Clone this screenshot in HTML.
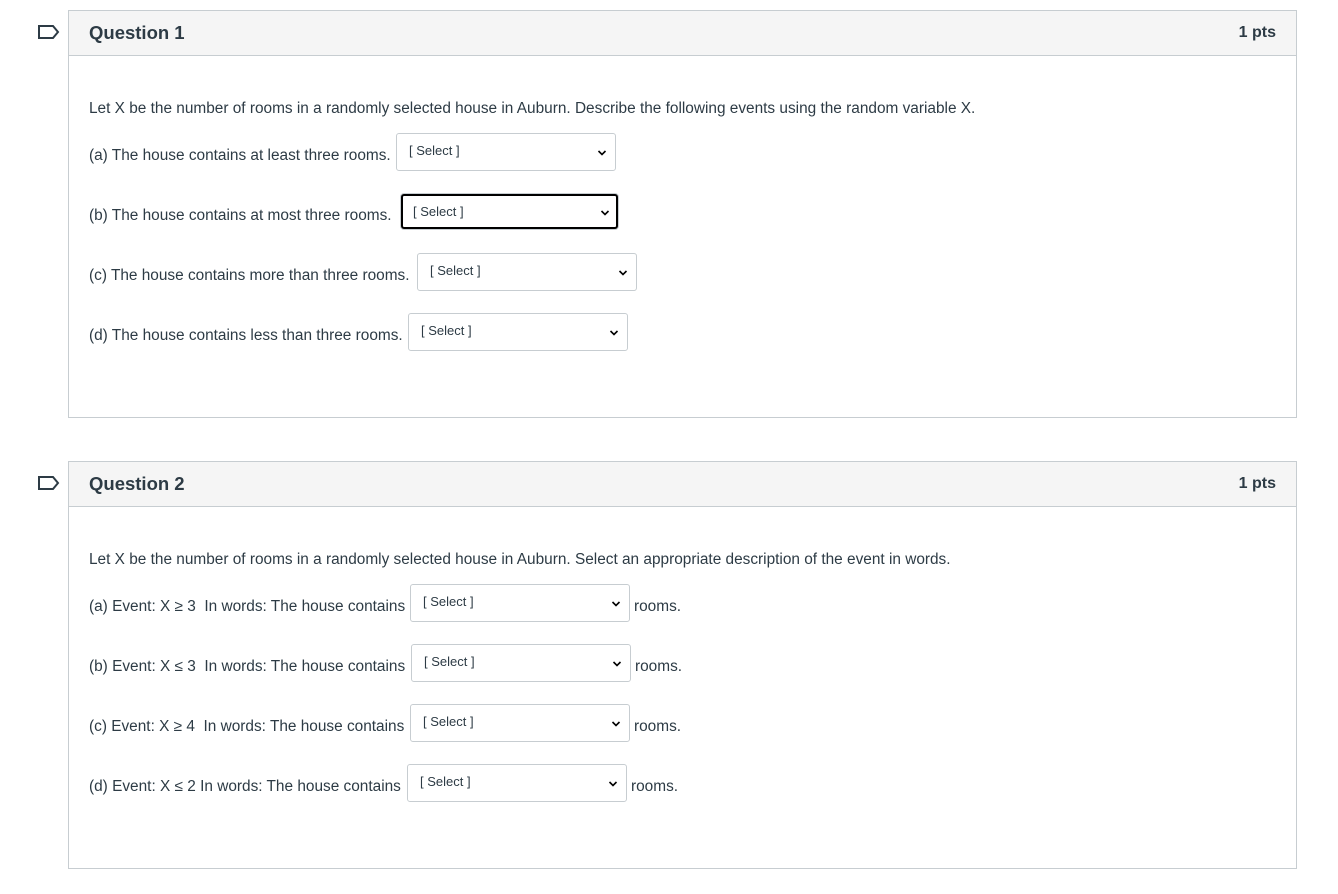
<!DOCTYPE html>
<html><head><meta charset="utf-8"><style>
body{margin:0;width:1338px;height:894px;background:#fff;font-family:"Liberation Sans",sans-serif;color:#2d3b45;position:relative;overflow:hidden}
.box{position:absolute;left:68px;width:1229px;height:408px;border:1px solid #c7cdd1;box-sizing:border-box}
.hd{position:absolute;left:0;top:0;right:0;height:44px;background:#f5f5f5;border-bottom:1px solid #c7cdd1}
.hd b{position:absolute;left:20px;top:11px;font-size:18.5px}
.hd i{position:absolute;right:20px;top:13px;font-size:16px;font-style:normal;font-weight:bold}
.t{position:absolute;font-size:15.4px;white-space:nowrap}
.s{position:absolute;width:220px;height:38px;border:1px solid #c7cdd1;border-radius:3px;box-sizing:border-box;background:#fff}
.s span{position:absolute;left:12px;top:9px;font-size:13px}
.s svg{position:absolute;right:8px;top:15px}
.f{border:2px solid #000;box-shadow:0 0 0 1px #c7cdd1;height:35px;width:217px}
.flag{position:absolute;left:37px;width:24px;height:16px}
</style></head><body>
<svg class="flag" style="top:24px" viewBox="0 0 24 16"><path d="M2 2H16L21 8L16 14H2Z" fill="none" stroke="#2d3b45" stroke-width="2"/></svg>
<svg class="flag" style="top:475px" viewBox="0 0 24 16"><path d="M2 2H16L21 8L16 14H2Z" fill="none" stroke="#2d3b45" stroke-width="2"/></svg>

<div class="box" style="top:10px"><div class="hd"><b>Question 1</b><i>1 pts</i></div></div>
<div class="t" style="left:89px;top:100px">Let X be the number of rooms in a randomly selected house in Auburn. Describe the following events using the random variable X.</div>
<div class="t" style="left:89px;top:147px">(a) The house contains at least three rooms.</div>
<div class="s" style="left:396px;top:133px"><span>[ Select ]</span><svg width="10" height="8"><path d="M1.5 2L5 5.5L8.5 2" fill="none" stroke="#000" stroke-width="1.6"/></svg></div>
<div class="t" style="left:89px;top:207px">(b) The house contains at most three rooms.</div>
<div class="s f" style="left:401px;top:194px"><span style="left:10px;top:8px">[ Select ]</span><svg width="10" height="8" style="top:13px;right:6px"><path d="M1.5 2L5 5.5L8.5 2" fill="none" stroke="#000" stroke-width="1.6"/></svg></div>
<div class="t" style="left:89px;top:267px">(c) The house contains more than three rooms.</div>
<div class="s" style="left:417px;top:253px"><span>[ Select ]</span><svg width="10" height="8"><path d="M1.5 2L5 5.5L8.5 2" fill="none" stroke="#000" stroke-width="1.6"/></svg></div>
<div class="t" style="left:89px;top:327px">(d) The house contains less than three rooms.</div>
<div class="s" style="left:408px;top:313px"><span>[ Select ]</span><svg width="10" height="8"><path d="M1.5 2L5 5.5L8.5 2" fill="none" stroke="#000" stroke-width="1.6"/></svg></div>

<div class="box" style="top:461px"><div class="hd"><b>Question 2</b><i>1 pts</i></div></div>
<div class="t" style="left:89px;top:551px">Let X be the number of rooms in a randomly selected house in Auburn. Select an appropriate description of the event in words.</div>
<div class="t" style="left:89px;top:598px">(a) Event: X ≥ 3&nbsp; In words: The house contains</div>
<div class="s" style="left:410px;top:584px"><span>[ Select ]</span><svg width="10" height="8"><path d="M1.5 2L5 5.5L8.5 2" fill="none" stroke="#000" stroke-width="1.6"/></svg></div>
<div class="t" style="left:634px;top:598px">rooms.</div>
<div class="t" style="left:89px;top:658px">(b) Event: X ≤ 3&nbsp; In words: The house contains</div>
<div class="s" style="left:411px;top:644px"><span>[ Select ]</span><svg width="10" height="8"><path d="M1.5 2L5 5.5L8.5 2" fill="none" stroke="#000" stroke-width="1.6"/></svg></div>
<div class="t" style="left:635px;top:658px">rooms.</div>
<div class="t" style="left:89px;top:718px">(c) Event: X ≥ 4&nbsp; In words: The house contains</div>
<div class="s" style="left:410px;top:704px"><span>[ Select ]</span><svg width="10" height="8"><path d="M1.5 2L5 5.5L8.5 2" fill="none" stroke="#000" stroke-width="1.6"/></svg></div>
<div class="t" style="left:634px;top:718px">rooms.</div>
<div class="t" style="left:89px;top:778px">(d) Event: X ≤ 2 In words: The house contains</div>
<div class="s" style="left:407px;top:764px"><span>[ Select ]</span><svg width="10" height="8"><path d="M1.5 2L5 5.5L8.5 2" fill="none" stroke="#000" stroke-width="1.6"/></svg></div>
<div class="t" style="left:631px;top:778px">rooms.</div>
</body></html>
